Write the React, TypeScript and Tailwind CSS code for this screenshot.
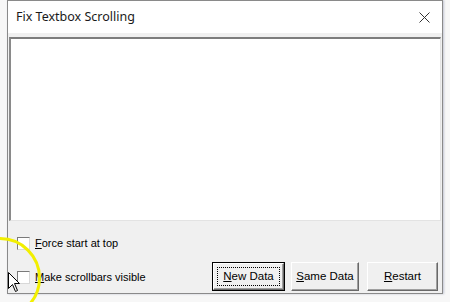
import React from "react";

const ui = { fontFamily: '"Liberation Sans", Arial, sans-serif' };

function Checkbox({ label }: { label: React.ReactNode }) {
  return (
    <div className="flex items-center gap-[5px] h-[13px]">
      <div className="w-[13px] h-[13px] bg-white border border-t-[#7a7a7a] border-l-[#7a7a7a] border-b-[#d8d8d8] border-r-[#d8d8d8] shrink-0" />
      <span className="text-[11px] leading-[13px] text-black whitespace-nowrap">{label}</span>
    </div>
  );
}

function Btn({ children, w, def }: { children: React.ReactNode; w: string; def?: boolean }) {
  return (
    <div className={`${w} h-[29px] ${def ? "border border-black" : ""} bg-[#f0f0f0]`}>
      <div className="w-full h-full border border-t-white border-l-white border-b-[#696969] border-r-[#696969] shadow-[inset_-1px_-1px_0_#a0a0a0] flex items-center justify-center relative">
        {def && <div className="absolute inset-[3px] border border-dotted border-black" />}
        <span className="text-[11.5px] leading-none text-black whitespace-nowrap relative">{children}</span>
      </div>
    </div>
  );
}

export default function App() {
  return (
    <div className="w-[450px] h-[302px] bg-[#f7f7f7] relative overflow-hidden" style={ui}>
      <div className="ml-[7px] w-[436px] h-[294px] border border-[#8a8a8a] bg-[#f0f0f0] flex flex-col shadow-[1px_0_2px_rgba(90,100,140,0.35)]">
        <div className="h-[32px] bg-white flex items-center justify-between pl-[8px] pr-[12px] shrink-0">
          <span className="text-[12.5px] text-[#1a1a1a]" style={{ fontFamily: '"Noto Sans", "Open Sans", sans-serif' }}>
            Fix Textbox Scrolling
          </span>
          <svg width="11" height="11" viewBox="0 0 11 11" className="mt-[1px]">
            <path d="M0.5 0.5 L10.5 10.5 M10.5 0.5 L0.5 10.5" stroke="#333333" strokeWidth="1" fill="none" />
          </svg>
        </div>
        <div className="mt-[4px] mx-[1px] h-[184px] bg-white border-t-2 border-l-2 border-t-[#7d7d7d] border-l-[#8a8a8a] border-b border-r border-b-[#e3e3e3] border-r-[#e3e3e3] shrink-0" />
        <div className="flex-1 flex">
          <div className="pl-[9px] pt-[16px] flex flex-col gap-[21px]">
            <Checkbox label={<><span className="underline">F</span>orce start at top</>} />
            <Checkbox label={<><span className="underline">M</span>ake scrollbars visible</>} />
          </div>
          <div className="ml-auto mr-[4px] mb-[2px] self-end flex">
            <Btn w="w-[73px]" def>
              <span className="underline">N</span>ew Data
            </Btn>
            <div className="w-[6px]" />
            <Btn w="w-[68px]">
              <span className="underline">S</span>ame Data
            </Btn>
            <div className="w-[8px]" />
            <Btn w="w-[71px]">
              <span className="underline">R</span>estart
            </Btn>
          </div>
        </div>
      </div>
      <div className="absolute left-[-41px] top-[237px] w-[82px] h-[82px] rounded-full border-[3px] border-[#f2ef00]" />
      <svg className="absolute left-[8px] top-[272px]" width="13" height="21" viewBox="0 0 13 21">
        <path d="M0.5 0.5 L0.5 16.5 L4.5 12.5 L7.5 19.5 L9.5 18.5 L6.5 11.5 L11.5 11.5 Z" fill="white" stroke="black" strokeWidth="1" strokeLinejoin="miter" />
      </svg>
    </div>
  );
}
